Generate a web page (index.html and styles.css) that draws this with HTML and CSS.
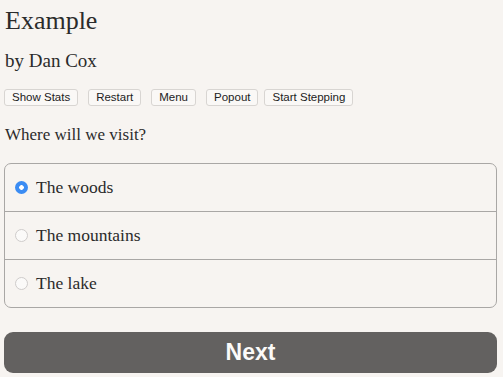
FILE: index.html
```html
<!DOCTYPE html>
<html>
<head>
<meta charset="utf-8">
<link rel="stylesheet" href="styles.css">
</head>
<body>
<div class="page">
  <h1 class="title">Example</h1>
  <p class="byline">by Dan Cox</p>
  <div class="toolbar">
    <button class="tool">Show Stats</button>
    <button class="tool">Restart</button>
    <button class="tool">Menu</button>
    <button class="tool">Popout</button>
    <button class="tool tool-last">Start Stepping</button>
  </div>
  <p class="prompt">Where will we visit?</p>
  <div class="choices">
    <label class="choice"><span class="radio radio-on"></span><span class="choice-text">The woods</span></label>
    <label class="choice"><span class="radio"></span><span class="choice-text">The mountains</span></label>
    <label class="choice"><span class="radio"></span><span class="choice-text">The lake</span></label>
  </div>
  <button class="next">Next</button>
</div>
</body>
</html>
```
FILE: styles.css
```css
html, body {
  margin: 0;
  padding: 0;
  background: #f7f4f1;
}
.page {
  padding: 0 6px 0 4px;
  font-family: "Liberation Serif", serif;
  color: #2b2b2b;
}
.title {
  margin: 0;
  padding: 6px 0 0 1px;
  font-size: 26px;
  font-weight: normal;
  line-height: 30px;
}
.byline {
  margin: 0;
  padding: 14px 0 0 1px;
  font-size: 19px;
  line-height: 22px;
}
.toolbar {
  display: flex;
  gap: 10px;
  margin-top: 17px;
}
.tool {
  font-family: "Liberation Sans", sans-serif;
  font-size: 11.5px;
  color: #222;
  background: #faf8f6;
  border: 1px solid #d8d5d2;
  border-radius: 3px;
  height: 17px;
  padding: 0 7px;
  line-height: 15px;
}
.tool-last {
  margin-left: -4px;
}
.prompt {
  margin: 0;
  padding: 19px 0 0 1px;
  font-size: 17px;
  line-height: 20px;
}
.choices {
  margin-top: 18px;
  border: 1px solid #a9a7a5;
  border-radius: 7px;
  display: flex;
  flex-direction: column;
}
.choice {
  display: flex;
  align-items: center;
  height: 47px;
  padding-left: 10px;
  gap: 8px;
  font-size: 17.5px;
}
.choice + .choice {
  border-top: 1px solid #a9a7a5;
}
.radio {
  width: 11px;
  height: 11px;
  border: 1px solid #cfcccb;
  border-radius: 50%;
  background: #fbfaf9;
  box-sizing: content-box;
}
.radio-on {
  width: 13px;
  height: 13px;
  border: none;
  background: radial-gradient(circle, #ffffff 0 2px, #3b8cf3 2.6px);
}
.next {
  display: block;
  width: 100%;
  margin-top: 24px;
  height: 41px;
  border: none;
  border-radius: 9px;
  background: #636160;
  color: #fbfaf9;
  font-family: "Liberation Sans", sans-serif;
  font-weight: bold;
  font-size: 23px;
}
```
